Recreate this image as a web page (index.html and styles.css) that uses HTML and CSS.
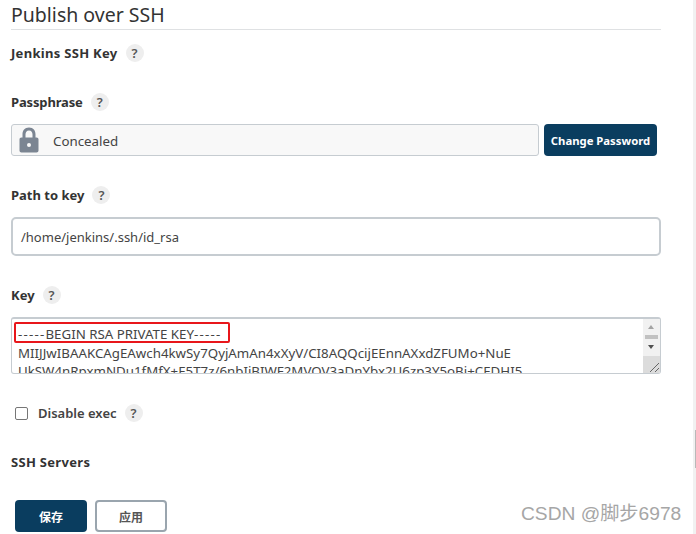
FILE: index.html
```html
<!DOCTYPE html>
<html lang="zh">
<head>
<meta charset="utf-8">
<title>Publish over SSH</title>
<link rel="stylesheet" href="styles.css">
</head>
<body>
<div class="rail"><div class="rail-thumb"></div></div>
<main class="page">
  <h2 class="title">Publish over SSH</h2>

  <div class="label-row row-jenkins"><span class="label">Jenkins SSH Key</span><span class="help">?</span></div>

  <div class="label-row row-pass"><span class="label">Passphrase</span><span class="help">?</span></div>
  <div class="pass-row">
    <div class="concealed">
      <svg class="lock" width="20" height="26" viewBox="0 0 20 26"><path fill="#7b8592" d="M10 0.5C5.6 0.5 3.5 3.6 3.5 7.5V10.5H2.5C1.2 10.500 0.500 11.300 0.500 12.500V23.500C0.500 24.700 1.300 25.500 2.500 25.500H17.500C18.700 25.500 19.500 24.700 19.500 23.500V12.500C19.500 11.300 18.800 10.500 17.500 10.500H16.500V7.500C16.500 3.600 14.400 0.500 10 0.500ZM10 3.500C12.400 3.500 13.500 5.200 13.500 7.500V10.500H6.500V7.500C6.500 5.200 7.600 3.500 10 3.500Z"/><circle cx="10" cy="18" r="2" fill="#f8f8f8"/></svg>
      <span class="concealed-text">Concealed</span>
    </div>
    <button class="btn-change" type="button">Change Password</button>
  </div>

  <div class="label-row row-path"><span class="label">Path to key</span><span class="help">?</span></div>
  <div class="path-input">/home/jenkins/.ssh/id_rsa</div>

  <div class="label-row row-key"><span class="label">Key</span><span class="help">?</span></div>
  <div class="keybox">
    <div class="keytext">
      <div><span class="dash">-----</span>BEGIN RSA PRIVATE KEY<span class="dash">-----</span></div>
      <div>MIIJJwIBAAKCAgEAwch4kwSy7QyjAmAn4xXyV/CI8AQQcijEEnnAXxdZFUMo+NuE</div>
      <div>UkSW4nRpxmNDu1fMfX+E5T7z/6nbIiBIWF2MVOV3aDnYbx2U6zp3Y5oBi+CEDHI5</div>
    </div>
    <div class="red-mark"></div>
    <div class="bar">
      <span class="arrow up"></span>
      <span class="bar-thumb"></span>
      <span class="arrow down"></span>
      <span class="grip">
        <svg width="12" height="12" viewBox="0 0 12 12"><path d="M11 2L2 11M11 7L7 11" stroke="#666" stroke-width="1" fill="none"/></svg>
      </span>
    </div>
  </div>

  <label class="check-row"><span class="check"></span><span class="check-text">Disable exec</span><span class="help">?</span></label>

  <div class="label-row row-servers"><span class="label">SSH Servers</span></div>

  <div class="actions">
    <button class="btn-save" type="button">保存</button>
    <button class="btn-apply" type="button">应用</button>
  </div>
</main>
<div class="watermark">CSDN @脚步6978</div>
</body>
</html>
```
FILE: styles.css
```css
html, body {
  margin: 0;
  padding: 0;
  height: 534px;
  overflow: hidden;
  background: #fff;
}
body {
  position: relative;
  font-family: "Noto Sans", "Noto Sans CJK SC", sans-serif;
  color: #333;
}
.page {
  padding: 0 35px 0 11px;
  width: 650px;
}
.title {
  margin: 0;
  height: 29px;
  line-height: 30px;
  font-size: 19.5px;
  font-weight: 400;
  color: #333;
  border-bottom: 1px solid #dfe1e3;
}
.label-row {
  display: flex;
  align-items: center;
  gap: 7px;
  height: 18px;
}
.row-jenkins { margin-top: 14px; }
.row-pass { margin-top: 31px; }
.row-path { margin-top: 30px; }
.row-key { margin-top: 30px; }
.row-servers { margin-top: 31px; }
.label {
  font-size: 13px;
  font-weight: 700;
  color: #333;
}
.row-jenkins .label, .row-servers .label { letter-spacing: 0.3px; }
.row-pass .label { letter-spacing: -0.15px; }
.row-pass .help { margin-left: 1px; }
.help {
  display: inline-flex;
  align-items: center;
  justify-content: center;
  width: 18px;
  height: 18px;
  border-radius: 50%;
  background: #eeeeee;
  font-size: 13px;
  font-weight: 600;
  color: #555;
  margin-left: 1px;
}
.pass-row {
  display: flex;
  gap: 5px;
  margin-top: 13px;
  height: 32px;
}
.concealed {
  box-sizing: border-box;
  width: 528px;
  height: 32px;
  display: flex;
  align-items: center;
  gap: 14px;
  padding-left: 7px;
  background: #f8f8f8;
  border: 1px solid #c6ccd1;
  border-radius: 3px;
  font-size: 13.3px;
  color: #444;
}
.concealed-text { padding-top: 2px; }
.lock { flex: none; }
.btn-change {
  box-sizing: border-box;
  width: 113px;
  height: 32px;
  border: 0;
  border-radius: 4px;
  background: #0a3d5f;
  color: #fff;
  font: 700 11.3px "Noto Sans", sans-serif;
  padding: 0;
}
.path-input {
  box-sizing: border-box;
  margin-top: 13px;
  width: 650px;
  height: 39px;
  line-height: 37px;
  padding-left: 8px;
  border: 2px solid #c6ccd1;
  border-radius: 5px;
  font-size: 13px;
  color: #444;
}
.keybox {
  position: relative;
  box-sizing: border-box;
  margin-top: 13px;
  width: 650px;
  height: 57px;
  border: 1px solid #c6ccd1;
  border-top-width: 2px;
  border-radius: 3px;
  overflow: hidden;
  font-size: 13.3px;
  color: #444;
}
.keytext {
  padding: 6px 0 0 6px;
  line-height: 18.5px;
  white-space: nowrap;
}
.dash { letter-spacing: 1.2px; }
.red-mark {
  position: absolute;
  left: 2px;
  top: 3px;
  width: 212px;
  height: 17px;
  border: 2px solid #e8161b;
  border-radius: 2px;
}
.bar {
  position: absolute;
  right: 0;
  top: 0;
  bottom: 0;
  width: 17px;
  background: #f1f1f1;
}
.arrow {
  position: absolute;
  left: 5px;
  width: 0;
  height: 0;
  border-left: 3.5px solid transparent;
  border-right: 3.5px solid transparent;
}
.arrow.up { top: 6px; border-bottom: 4px solid #a3a3a3; }
.arrow.down { top: 26px; border-top: 4px solid #505050; }
.bar-thumb {
  position: absolute;
  left: 2px;
  top: 16px;
  width: 13px;
  height: 4px;
  background: #c1c1c1;
}
.grip {
  position: absolute;
  left: 0;
  bottom: 0;
  width: 17px;
  height: 17px;
  background: #dcdcdc;
  display: flex;
  align-items: flex-end;
  justify-content: flex-end;
}
.check-row {
  display: flex;
  align-items: center;
  height: 18px;
  margin-top: 30px;
  margin-left: 4px;
  gap: 5px;
}
.check {
  box-sizing: border-box;
  width: 13px;
  height: 13px;
  border: 1px solid #767676;
  border-radius: 2px;
  margin-right: 5px;
}
.check-text {
  font-size: 13px;
  font-weight: 600;
  color: #444;
}
.check-row .help { margin-left: 3px; }
.actions {
  display: flex;
  gap: 8px;
  margin: 29px 0 0 4px;
}
.btn-save, .btn-apply {
  box-sizing: border-box;
  width: 72px;
  height: 32px;
  border-radius: 4px;
  font: 700 12px "Noto Sans CJK SC", sans-serif;
  padding: 0;
}
.btn-save {
  border: 0;
  background: #0a3d5f;
  color: #fff;
}
.btn-apply {
  border: 2px solid #9aa5ae;
  background: #fff;
  color: #555;
}
.rail {
  position: absolute;
  right: 0;
  top: 0;
  bottom: 0;
  width: 3px;
  background: #f1f1f1;
}
.rail-thumb {
  position: absolute;
  top: 430px;
  right: 0;
  width: 1px;
  height: 38px;
  background: #b9b9b9;
}
.watermark {
  position: absolute;
  left: 521px;
  top: 503px;
  font: 400 19.2px/22px "Liberation Sans", "Noto Sans CJK SC", sans-serif;
  color: #a6a6a6;
  white-space: nowrap;
}
```
